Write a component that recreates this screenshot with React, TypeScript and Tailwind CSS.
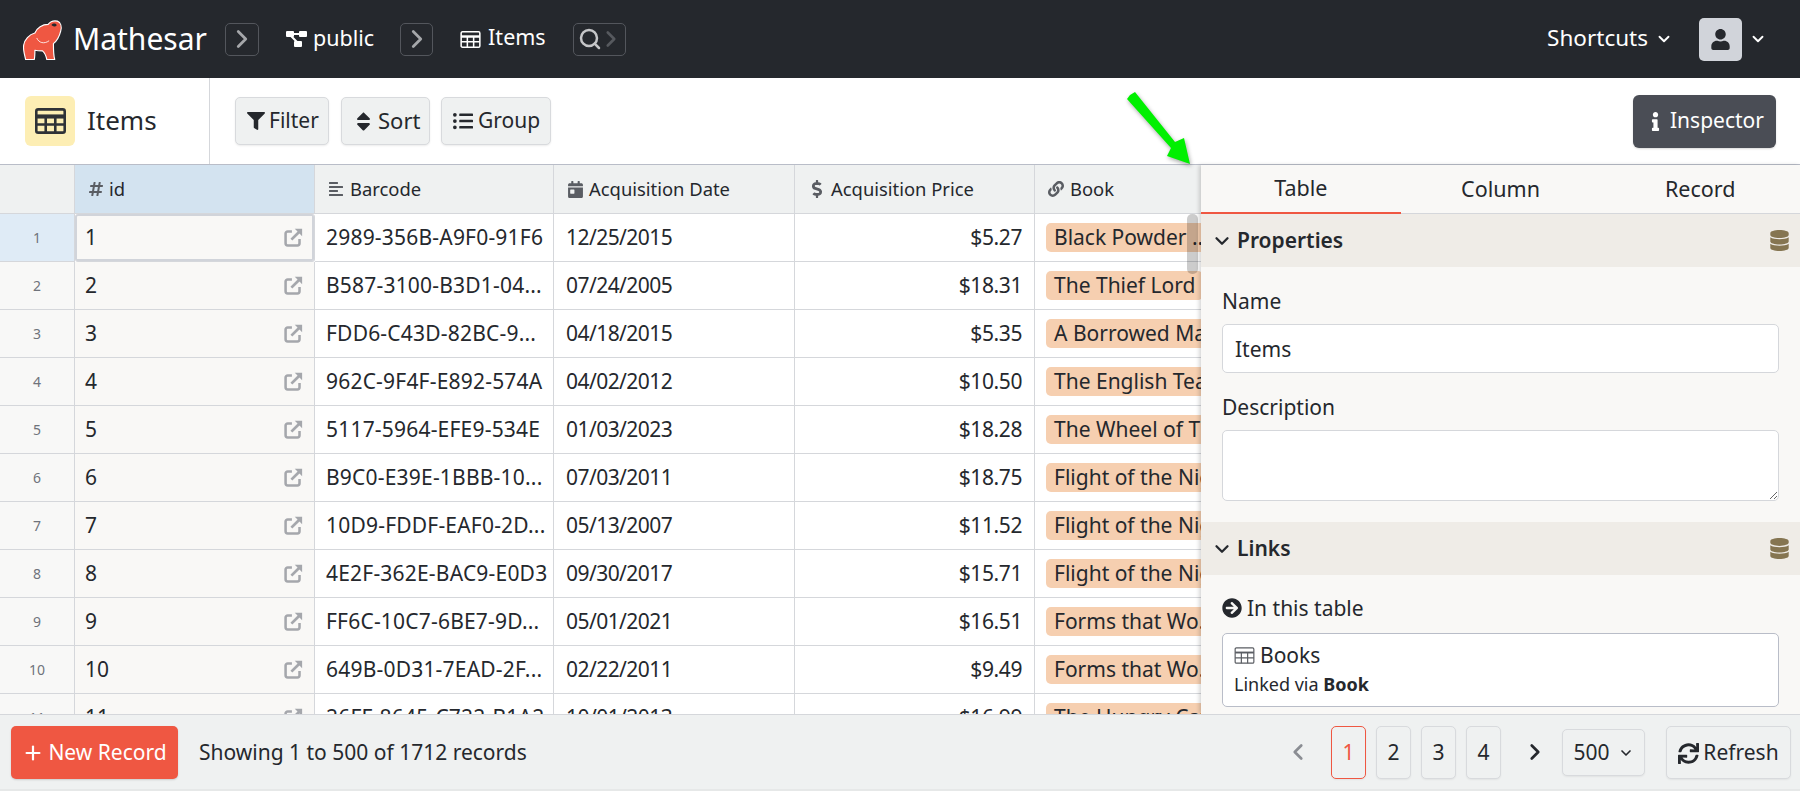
import { ChevronDown, ChevronLeft, ChevronRight, Plus, Search } from "lucide-react";
import {
  FaAlignLeft,
  FaArrowCircleRight,
  FaCalendarDay,
  FaDatabase,
  FaDollarSign,
  FaFilter,
  FaHashtag,
  FaInfo,
  FaLink,
  FaListUl,
  FaSort,
  FaSync,
  FaUser,
} from "react-icons/fa";

const rows = [
  ["2989-356B-A9F0-91F6", "12/25/2015", "$5.27", "Black Powder ..."],
  ["B587-3100-B3D1-04...", "07/24/2005", "$18.31", "The Thief Lord"],
  ["FDD6-C43D-82BC-9...", "04/18/2015", "$5.35", "A Borrowed Man"],
  ["962C-9F4F-E892-574A", "04/02/2012", "$10.50", "The English Teacher"],
  ["5117-5964-EFE9-534E", "01/03/2023", "$18.28", "The Wheel of Time"],
  ["B9C0-E39E-1BBB-10...", "07/03/2011", "$18.75", "Flight of the Nightingale"],
  ["10D9-FDDF-EAF0-2D...", "05/13/2007", "$11.52", "Flight of the Nightingale"],
  ["4E2F-362E-BAC9-E0D3", "09/30/2017", "$15.71", "Flight of the Nightingale"],
  ["FF6C-10C7-6BE7-9D...", "05/01/2021", "$16.51", "Forms that Wo."],
  ["649B-0D31-7EAD-2F...", "02/22/2011", "$9.49", "Forms that Wo."],
  ["26FF-8645-C722-B1A2", "10/01/2013", "$16.99", "The Hungry Caterpillar"],
];

const gridCols = "grid grid-cols-[75px_240px_239px_241px_240px_240px] w-[1275px]";

const Logo = () => (
  <svg viewBox="30 20 130 135" className="w-[43px] h-[45px] shrink-0">
    <path
      d="M44 148C40 130 36 118 38 105C40 88 55 72 72 68C78 52 95 42 112 42C118 34 130 30 140 32C150 36 154 48 150 62C146 78 138 92 128 100C128 115 128 135 132 148L108 148C106 138 102 128 95 122C88 122 80 122 72 120C72 130 72 140 70 148Z"
      fill="#ef5742"
      stroke="#fff"
      strokeWidth="3.5"
      strokeLinejoin="round"
    />
    <path d="M122 44C127 38 134 38 138 44C136 50 128 50 122 44Z" fill="#25282d" />
    <path d="M78 84C84 98 100 102 114 92" fill="none" stroke="#fff" strokeWidth="2.5" strokeLinecap="round" />
  </svg>
);

// outlined table: heavy header band, 3 columns by 2 rows
const TableIcon = ({ className, weight = 2 }: { className: string; weight?: number }) => (
  <svg viewBox="0 0 24 20" className={className} fill="none" stroke="currentColor" strokeWidth={weight}>
    <rect x="1" y="1" width="22" height="18" rx="1.5" />
    <path d="M1 6.5H23" strokeWidth={weight * 1.6} />
    <path d="M1 12.7H23M8.3 6.5V19M15.7 6.5V19" />
  </svg>
);

const SchemaIcon = () => (
  <svg viewBox="0 0 21 16" className="w-[21px] h-[16px] ml-[27px] shrink-0" fill="currentColor">
    <rect x="0" y="0" width="8" height="6" rx="1" />
    <rect x="13" y="0" width="8" height="6" rx="1" />
    <rect x="8" y="10" width="8" height="6" rx="1" />
    <path d="M7 3H14M5 5L11 11" stroke="currentColor" strokeWidth="2" />
  </svg>
);

const OpenIcon = () => (
  <svg viewBox="0 0 18 18" className="w-[19px] h-[19px] ml-auto text-[#a5a7ac] shrink-0" fill="none" stroke="currentColor">
    <path d="M7.5 3.3H3.5A2 2 0 0 0 1.5 5.3V14.5A2 2 0 0 0 3.5 16.5H12.7A2 2 0 0 0 14.7 14.5V10.5" strokeWidth="2.4" />
    <path d="M7 11L15 3" strokeWidth="2.6" />
    <path d="M10.2 0.8H17.2V7.8Z" fill="currentColor" stroke="none" />
  </svg>
);

const ToolButton = ({ children, className }: { children: React.ReactNode; className: string }) => (
  <button className={`flex items-center h-[48px] rounded-[5px] bg-[#eff1f1] border border-[#d8dadd] shadow-[0_1px_2px_rgba(0,0,0,0.08)] text-[21px] text-[#25282d] ${className}`}>
    {children}
  </button>
);

const HeaderCell = ({ icon, label, active }: { icon?: React.ReactNode; label?: string; active?: boolean }) => (
  <div className={`flex items-center h-[49px] pl-[13px] border-r border-b border-[#d5d7db] text-[18.4px] text-[#25282d] ${active ? "bg-[#d3e3f0]" : "bg-[#eff1f1]"}`}>
    {icon}
    {label}
  </div>
);

const PageButton = ({ n, current }: { n: number; current?: boolean }) => (
  <button
    className={`flex items-center justify-center w-[35px] h-[53px] pt-[2px] rounded-[5px] border bg-[#eff1f1] text-[21px] shadow-[0_1px_2px_rgba(0,0,0,0.06)] ${
      current ? "border-[#ef5742] text-[#ef5742]" : "border-[#d8dadd] text-[#25282d]"
    }`}
  >
    {n}
  </button>
);

const SectionHeader = ({ title }: { title: string }) => (
  <div className="flex items-center h-[53px] bg-[#efece7] pl-[10px] pr-[10px] text-[21px] font-semibold text-[#25282d]">
    <ChevronDown size={22} strokeWidth={2.5} className="mr-[4px]" />
    {title}
    <FaDatabase size={21} className="ml-auto text-[#857551]" />
  </div>
);

export default function App() {
  return (
    <div className="relative flex flex-col h-[791px] w-[1800px] overflow-hidden bg-[#e6e8e8] font-['Noto_Sans',sans-serif] text-[#25282d]">
      <header className="flex items-center h-[78px] shrink-0 bg-[#25282d] text-white pl-[21px] pr-[33px]">
        <Logo />
        <span className="ml-[9px] -mt-[2px] text-[30px]">Mathesar</span>
        <div className="ml-[18px] flex items-center justify-center w-[34px] h-[33px] rounded-[5px] border border-[#53565c]">
          <ChevronRight size={30} strokeWidth={2.2} className="text-[#a5a7aa]" />
        </div>
        <SchemaIcon />
        <span className="ml-[6px] -mt-[2px] text-[21.5px]">public</span>
        <div className="ml-[26px] flex items-center justify-center w-[33px] h-[33px] rounded-[5px] border border-[#53565c]">
          <ChevronRight size={30} strokeWidth={2.2} className="text-[#a5a7aa]" />
        </div>
        <TableIcon className="ml-[27px] w-[21px] h-[17px] shrink-0" weight={1.8} />
        <span className="ml-[7px] -mt-[3px] text-[21.5px]">Items</span>
        <div className="ml-[27px] flex items-center pl-[4px] w-[53px] h-[33px] rounded-[5px] border border-[#53565c]">
          <Search size={24} strokeWidth={2.5} className="text-[#c5c6c8] shrink-0" />
          <ChevronRight size={26} strokeWidth={2.4} className="text-[#56595e] shrink-0 -ml-[4px]" />
        </div>
        <span className="ml-auto -mt-[2px] text-[22.5px]">Shortcuts</span>
        <ChevronDown size={18} strokeWidth={2.5} className="ml-[7px]" />
        <div className="ml-[26px] flex items-center justify-center w-[43px] h-[43px] rounded-[5px] bg-[#d1d4da]">
          <FaUser size={21} className="text-[#25282d]" />
        </div>
        <ChevronDown size={18} strokeWidth={2.5} className="ml-[7px]" />
      </header>

      <div className="flex h-[87px] shrink-0 bg-white border-b border-[#b9bdc8]">
        <div className="flex items-center w-[210px] pl-[25px] border-r border-[#d5d7db]">
          <div className="flex items-center justify-center w-[50px] h-[50px] rounded-[6px] bg-[#fdeeb4]">
            <TableIcon className="w-[31px] h-[26px] text-[#2f3237]" weight={2} />
          </div>
          <span className="ml-[12px] -mt-[2px] text-[26px]">Items</span>
        </div>
        <div className="flex flex-1 items-center pl-[25px] pr-[24px]">
          <ToolButton className="w-[94px] pl-[11px]">
            <FaFilter size={18} className="mr-[4px]" />
            Filter
          </ToolButton>
          <ToolButton className="ml-[12px] w-[89px] pl-[10px] pb-[2px] text-[22px]">
            <FaSort size={23} className="mr-[3px] mt-[2px]" />
            Sort
          </ToolButton>
          <ToolButton className="ml-[11px] w-[110px] pl-[11px]">
            <FaListUl size={20} className="mr-[5px]" />
            Group
          </ToolButton>
          <button className="ml-auto flex items-center h-[53px] w-[143px] pl-[13px] rounded-[6px] bg-[#4a4d55] text-white text-[21px] shadow-[0_1px_2px_rgba(0,0,0,0.15)]">
            <FaInfo size={19} className="mr-[5px]" />
            Inspector
          </button>
        </div>
      </div>

      <div className="flex flex-1 min-h-0 bg-white">
        <div className="relative flex-1 min-w-0 overflow-hidden">
          <div className={gridCols}>
            <HeaderCell />
            <HeaderCell active icon={<FaHashtag size={16} className="mr-[5px] text-[#5a5d63]" />} label="id" />
            <HeaderCell icon={<FaAlignLeft size={16} className="mr-[6px] text-[#5a5d63]" />} label="Barcode" />
            <HeaderCell icon={<FaCalendarDay size={17} className="mr-[5px] text-[#5a5d63]" />} label="Acquisition Date" />
            <HeaderCell icon={<FaDollarSign size={18} className="mr-[5px] text-[#5a5d63]" />} label="Acquisition Price" />
            <HeaderCell icon={<FaLink size={16} className="mr-[6px] text-[#5a5d63]" />} label="Book" />
          </div>
          {rows.map((row, i) => (
            <div key={i} className={`${gridCols} h-[48px] text-[21px] [&>div]:border-r [&>div]:border-b [&>div]:border-[#d5d7db]`}>
              <div className={`flex items-center justify-center text-[14px] text-[#6f737b] ${i === 0 ? "bg-[#dfebf6]" : "bg-[#f8f8f7]"}`}>{i + 1}</div>
              <div className={`flex items-center bg-[#f9f8f6] pl-[10px] pr-[11px] ${i === 0 ? "rounded-[3px] shadow-[inset_0_0_0_2px_#d1d4da]" : ""}`}>
                {i + 1}
                <OpenIcon />
              </div>
              <div className="flex items-center pl-[11px] whitespace-nowrap overflow-hidden tracking-[0.2px]">{row[0]}</div>
              <div className="flex items-center pl-[12px] tracking-[-0.55px]">{row[1]}</div>
              <div className="flex items-center justify-end pr-[12px] tracking-[-0.4px]">{row[2]}</div>
              <div className="flex items-center pl-[11px] whitespace-nowrap">
                <span className="flex items-center h-[29px] px-[8px] rounded-[5px] bg-[#f6cfb0]">{row[3]}</span>
              </div>
            </div>
          ))}
          <div className="absolute right-[3px] top-[49px] w-[11px] h-[60px] rounded-[5px] bg-[#00000033]" />
        </div>

        <aside className="z-10 w-[599px] shrink-0 overflow-hidden bg-[#f9f8f6] shadow-[-2px_0_4px_rgba(0,0,0,0.16)]">
          <div className="flex h-[49px] border-b border-[#d5d7db] text-[21.5px]">
            <div className="flex flex-1 items-center justify-center -mb-px border-b-2 border-[#ef5742]">Table</div>
            <div className="flex flex-1 items-center justify-center">Column</div>
            <div className="flex flex-1 items-center justify-center">Record</div>
          </div>
          <SectionHeader title="Properties" />
          <div className="px-[21px] pt-[20px] pb-[21px] text-[21px]">
            <div className="leading-[28px]">Name</div>
            <div className="mt-[9px] flex items-center h-[49px] pl-[12px] pt-[2px] rounded-[5px] bg-white border border-[#d5d7db]">Items</div>
            <div className="mt-[20px] leading-[28px]">Description</div>
            <textarea className="mt-[9px] block w-full h-[71px] rounded-[5px] bg-white border border-[#d5d7db]" />
          </div>
          <SectionHeader title="Links" />
          <div className="px-[21px] pt-[19px] text-[21px]">
            <div className="flex items-center leading-[28px]">
              <FaArrowCircleRight size={20} className="mr-[5px]" />
              In this table
            </div>
            <div className="mt-[11px] h-[74px] pl-[11px] pt-[7px] rounded-[5px] bg-white border border-[#b9bdc8]">
              <div className="flex items-center leading-[28px]">
                <TableIcon className="w-[21px] h-[17px] mr-[5px] text-[#5a5d63]" weight={1.4} />
                Books
              </div>
              <div className="mt-[2px] text-[18px] leading-[26px]">
                Linked via <b className="font-bold">Book</b>
              </div>
            </div>
          </div>
        </aside>
      </div>

      <footer className="z-20 flex items-center h-[75px] mb-[2px] shrink-0 pl-[11px] pr-[9px] bg-[#eff1f1] border-t border-[#d5d7db]">
        <button className="flex items-center justify-center w-[167px] h-[53px] pt-[2px] rounded-[5px] bg-[#ef5742] text-white text-[21px] shadow-[0_1px_2px_rgba(0,0,0,0.15)]">
          <Plus size={22} strokeWidth={2.4} className="mr-[4px]" />
          New Record
        </button>
        <span className="ml-[21px] pt-[2px] text-[21px]">Showing 1 to 500 of 1712 records</span>
        <ChevronLeft size={26} strokeWidth={2.5} className="ml-auto text-[#8a8d93]" />
        <div className="ml-[20px] flex gap-[10px]">
          <PageButton n={1} current />
          <PageButton n={2} />
          <PageButton n={3} />
          <PageButton n={4} />
        </div>
        <ChevronRight size={26} strokeWidth={2.5} className="ml-[21px]" />
        <button className="ml-[14px] flex items-center justify-center w-[83px] h-[47px] pt-[2px] rounded-[5px] border border-[#d8dadd] bg-[#eff1f1] text-[21px] shadow-[0_1px_2px_rgba(0,0,0,0.06)]">
          500
          <ChevronDown size={16} strokeWidth={2.5} className="ml-[8px]" />
        </button>
        <button className="ml-[21px] flex items-center justify-center w-[125px] h-[53px] pt-[2px] rounded-[5px] border border-[#d8dadd] bg-[#eff1f1] text-[21px] shadow-[0_1px_2px_rgba(0,0,0,0.06)]">
          <FaSync size={21} className="mr-[4px]" />
          Refresh
        </button>
      </footer>

      {/* green callout arrow drawn over the screenshot */}
      <svg viewBox="0 0 70 80" className="absolute left-[1125px] top-[92px] z-30 w-[70px] h-[80px] drop-shadow-[1px_2px_2px_rgba(0,0,0,0.35)]">
        <path d="M5 3L10 0L50 50L59 46L65 72L42 64L46 56L2 7Z" fill="#00f000" />
      </svg>
    </div>
  );
}
